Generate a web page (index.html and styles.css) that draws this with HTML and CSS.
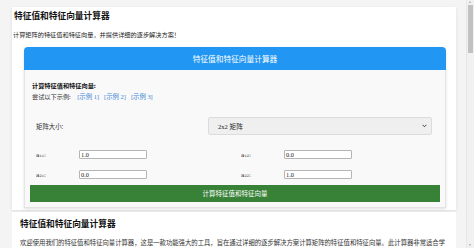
FILE: index.html
```html
<!DOCTYPE html>
<html lang="zh">
<head>
<meta charset="utf-8">
<title>特征值和特征向量计算器</title>
<link rel="stylesheet" href="styles.css">
</head>
<body>
<div class="page">
  <h1 class="title">特征值和特征向量计算器</h1>
  <p class="subtitle">计算矩阵的特征值和特征向量，并提供详细的逐步解决方案！</p>
  <div class="card">
    <div class="card-head">特征值和特征向量计算器</div>
    <div class="card-body">
      <div class="intro">
        <div class="intro-title">计算特征值和特征向量:</div>
        <div class="intro-examples">尝试以下示例: <a class="ex">[示例 1]</a><a class="ex">[示例 2]</a><a class="ex">[示例 3]</a></div>
      </div>
      <div class="size-row">
        <span class="size-label">矩阵大小:</span>
        <div class="select"><span class="select-text">2x2 矩阵</span>
          <svg class="chev" width="5" height="4" viewBox="0 0 5 4"><path d="M0.6 0.8 L2.5 2.8 L4.4 0.8" fill="none" stroke="#333" stroke-width="0.9"/></svg>
        </div>
      </div>
      <div class="matrix">
        <div class="cell"><span class="lbl">a₁₁:</span><span class="inp">1.0</span></div>
        <div class="cell"><span class="lbl">a₁₂:</span><span class="inp">0.0</span></div>
        <div class="cell"><span class="lbl">a₂₁:</span><span class="inp">0.0</span></div>
        <div class="cell"><span class="lbl">a₂₂:</span><span class="inp">1.0</span></div>
      </div>
      <div class="btn">计算特征值和特征向量</div>
    </div>
  </div>
</div>
<div class="section">
  <h2 class="section-title">特征值和特征向量计算器</h2>
  <p class="section-text">欢迎使用我们的特征值和特征向量计算器，这是一款功能强大的工具，旨在通过详细的逐步解决方案计算矩阵的特征值和特征向量。此计算器非常适合学</p>
</div>
<div class="scrollbar">
  <div class="arrow-up"></div>
  <div class="thumb"></div>
  <div class="arrow-down"></div>
</div>
</body>
</html>
```

FILE: styles.css
```css
html, body {
  margin: 0;
  height: 248px;
  overflow: hidden;
}
body {
  background: #f4f4f4;
  font-family: "Noto Sans CJK SC", "Noto Sans", sans-serif;
  color: #222;
}
.page {
  box-sizing: border-box;
  width: 444px;
  margin: 7px 0 0 12px;
  background: #fff;
  padding: 3px 2px 2px;
  box-shadow: 0 1px 3px rgba(0,0,0,0.10);
}
.title {
  margin: 0;
  font-size: 8.7px;
  line-height: 12px;
  font-weight: 700;
  color: #111;
}
.subtitle {
  margin: 9px 0 0 -1px;
  font-size: 6.2px;
  line-height: 8px;
  color: #222;
}
.card {
  margin: 8px 8px 0 10px;
  box-shadow: 0 1px 3px rgba(0,0,0,0.12);
  border-radius: 4px 4px 0 0;
}
.card-head {
  height: 23px;
  line-height: 23px;
  background: #2196f3;
  color: #fff;
  font-size: 7.7px;
  text-align: center;
  border-radius: 4px 4px 0 0;
}
.card-body {
  background: #f9f9f9;
  border: 1px solid #e4e4e4;
  border-top: 0;
  padding: 10px 5px 5px;
}
.intro {
  padding-left: 2px;
  font-size: 6.2px;
  line-height: 11px;
}
.intro-title {
  font-weight: 700;
  color: #111;
}
.intro-examples {
  color: #333;
}
.ex {
  font-family: "Liberation Serif", "Noto Sans CJK SC", serif;
  font-size: 6.4px;
  color: #3d85d8;
  margin-left: 5px;
}
.size-row {
  display: grid;
  grid-template-columns: 172px 1fr;
  align-items: center;
  margin-top: 15px;
  padding: 0 8px 0 6px;
}
.size-label {
  font-size: 6.4px;
  color: #333;
}
.select {
  box-sizing: border-box;
  height: 18px;
  background: #efefef;
  border: 1px solid #dcdcdc;
  border-radius: 2px;
  display: flex;
  align-items: center;
  justify-content: space-between;
  padding: 0 4px 0 9px;
}
.select-text {
  font-family: "Liberation Serif", "Noto Sans CJK SC", serif;
  font-size: 6.6px;
  color: #222;
}
.chev {
  display: block;
}
.matrix {
  display: grid;
  grid-template-columns: 205px 1fr;
  row-gap: 11px;
  margin-top: 15px;
  padding-left: 6px;
}
.cell {
  display: flex;
  align-items: center;
  height: 9px;
}
.lbl {
  width: 42.5px;
  font-family: "DejaVu Serif", serif;
  font-size: 5.8px;
  color: #333;
}
.inp {
  box-sizing: border-box;
  width: 68px;
  height: 9.5px;
  background: #fff;
  border: 1px solid #b5b5b5;
  border-radius: 1px;
  padding-left: 1.5px;
  font-family: "Liberation Serif", serif;
  font-size: 6.3px;
  line-height: 7.5px;
  color: #222;
}
.btn {
  margin-top: 6px;
  height: 17px;
  line-height: 17px;
  background: #388237;
  color: #fff;
  font-size: 6.5px;
  text-align: center;
}
.section {
  box-sizing: border-box;
  width: 444px;
  margin: 2px 0 0 12px;
  background: #fff;
  padding: 6px 8px 0;
  height: 36px;
  overflow: hidden;
}
.section-title {
  margin: 0;
  font-size: 8.7px;
  line-height: 12px;
  font-weight: 700;
  color: #111;
}
.section-text {
  margin: 8px 0 0;
  font-size: 6.35px;
  line-height: 9px;
  color: #333;
  white-space: nowrap;
}
.scrollbar {
  position: fixed;
  top: 0;
  right: 0;
  width: 7px;
  height: 248px;
  background: #f1f1f1;
  border-left: 1px solid #e6e6e6;
}
.thumb {
  position: absolute;
  top: 5px;
  left: 1px;
  width: 5px;
  height: 48px;
  background: #c1c1c1;
}
.arrow-up, .arrow-down {
  position: absolute;
  left: 2px;
  width: 0;
  height: 0;
  border-left: 1.5px solid transparent;
  border-right: 1.5px solid transparent;
}
.arrow-up {
  top: 1px;
  border-bottom: 2px solid #a3a3a3;
}
.arrow-down {
  bottom: 2px;
  border-top: 2px solid #a3a3a3;
}
```
